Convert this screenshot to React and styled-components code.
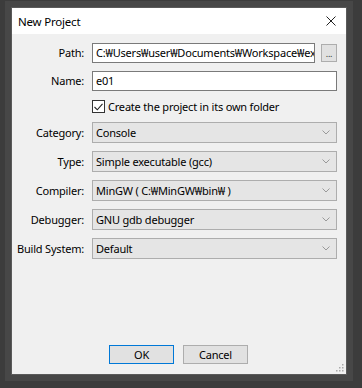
import React from "react";
import styled, { createGlobalStyle } from "styled-components";

const GlobalStyle = createGlobalStyle`
	html, body {
		margin: 0;
		padding: 0;
		background: #3c3c3c;
	}
	* {
		box-sizing: border-box;
	}
`;

const Screen = styled.div`
	width: 362px;
	height: 388px;
	padding: 8px 0 0 12px;
	font-family: "Noto Sans", "Open Sans", sans-serif;
	font-size: 11px;
	letter-spacing: -0.2px;
	color: #000;
`;

const Window = styled.div`
	width: 334px;
	height: 366px;
	background: #f0f0f0;
	display: flex;
	flex-direction: column;
	position: relative;
	box-shadow: 0 0 0 1px #5a5a5a, 0 0 0 7px #474747;
`;

const TitleBar = styled.div`
	height: 26px;
	background: #fff;
	display: flex;
	align-items: center;
	justify-content: space-between;
	padding: 0 10px 0 6px;
	font-size: 11.5px;
`;

const Body = styled.div`
	flex: 1;
	display: flex;
	flex-direction: column;
	padding: 9px 9px 10px 8px;
`;

const Form = styled.div`
	display: grid;
	grid-template-columns: 64px minmax(0, 1fr);
	column-gap: 8px;
	row-gap: 8px;
	align-items: center;
`;

const Label = styled.div`
	display: flex;
	justify-content: flex-end;
	white-space: nowrap;
	line-height: 20px;
	min-width: 0;
`;

const FieldRow = styled.div`
	display: flex;
	gap: 6px;
	align-items: center;
	min-width: 0;
`;

const TextBox = styled.div`
	flex: 1;
	min-width: 0;
	height: 20px;
	background: #fff;
	border: 1px solid #7a7a7a;
	padding: 0 3px;
	line-height: 18px;
	white-space: nowrap;
	overflow: hidden;
`;

const BrowseButton = styled.div`
	flex: none;
	width: 16px;
	height: 18px;
	background: #e1e1e1;
	border: 1px solid #adadad;
	font-size: 9px;
	line-height: 18px;
	text-align: center;
	color: #333;
`;

const CheckRow = styled.label`
	grid-column: 2;
	display: flex;
	align-items: center;
	gap: 3px;
	height: 15px;
`;

const CheckBox = styled.span`
	width: 13px;
	height: 13px;
	border: 1px solid #333;
	background: #fff;
	display: flex;
	align-items: center;
	justify-content: center;
`;

const Select = styled.div`
	height: 21px;
	background: #e5e5e5;
	border: 1px solid #adadad;
	display: flex;
	align-items: center;
	justify-content: space-between;
	padding: 0 6px 0 3px;
	white-space: nowrap;
	min-width: 0;
`;

const Buttons = styled.div`
	margin-top: auto;
	display: flex;
	justify-content: center;
	gap: 9px;
`;

const Button = styled.div`
	width: 65px;
	height: 19px;
	background: #e1e1e1;
	border: 1px solid ${(p) => (p.$primary ? "#0078d7" : "#adadad")};
	display: flex;
	align-items: center;
	justify-content: center;
`;

const Grip = styled.svg`
	position: absolute;
	right: 2px;
	bottom: 2px;
`;

const Chevron = () => (
	<svg width="8" height="5" viewBox="0 0 8 5">
		<path d="M0.5 0.5 L4 4 L7.5 0.5" fill="none" stroke="#999" strokeWidth="1" />
	</svg>
);

const selects = [
	["Category:", "Console"],
	["Type:", "Simple executable (gcc)"],
	["Compiler:", "MinGW ( C:\u20A9MinGW\u20A9bin\u20A9 )"],
	["Debugger:", "GNU gdb debugger"],
	["Build System:", "Default"],
];

const App = () => {
	return (
		<>
			<GlobalStyle />
			<Screen>
				<Window>
					<TitleBar>
						<span>New Project</span>
						<svg width="10" height="10" viewBox="0 0 10 10">
							<path d="M0.5 0.5 L9.5 9.5 M9.5 0.5 L0.5 9.5" stroke="#222" strokeWidth="1" />
						</svg>
					</TitleBar>
					<Body>
						<Form>
							<Label>Path:</Label>
							<FieldRow>
								<TextBox>C:₩Users₩user₩Documents₩Workspace₩exa</TextBox>
								<BrowseButton>...</BrowseButton>
							</FieldRow>
							<Label>Name:</Label>
							<TextBox>e01</TextBox>
							<CheckRow>
								<CheckBox>
									<svg width="9" height="8" viewBox="0 0 9 8">
										<path d="M0.5 4 L3.3 6.8 L8.5 0.8" fill="none" stroke="#222" strokeWidth="1.1" />
									</svg>
								</CheckBox>
								<span>Create the project in its own folder</span>
							</CheckRow>
							{selects.map(([label, value]) => (
								<React.Fragment key={label}>
									<Label>{label}</Label>
									<Select>
										<span>{value}</span>
										<Chevron />
									</Select>
								</React.Fragment>
							))}
						</Form>
						<Buttons>
							<Button $primary>OK</Button>
							<Button>Cancel</Button>
						</Buttons>
					</Body>
					<Grip width="8" height="8" viewBox="0 0 8 8">
						<rect x="6" y="0" width="1.5" height="1.5" fill="#aaa" />
						<rect x="3" y="3" width="1.5" height="1.5" fill="#aaa" />
						<rect x="6" y="3" width="1.5" height="1.5" fill="#aaa" />
						<rect x="0" y="6" width="1.5" height="1.5" fill="#aaa" />
						<rect x="3" y="6" width="1.5" height="1.5" fill="#aaa" />
						<rect x="6" y="6" width="1.5" height="1.5" fill="#aaa" />
					</Grip>
				</Window>
			</Screen>
		</>
	);
};

export default App;
